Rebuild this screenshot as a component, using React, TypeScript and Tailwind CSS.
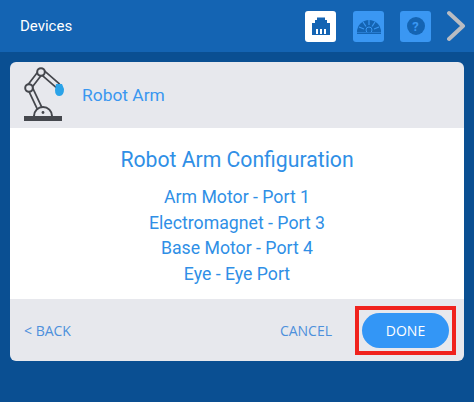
import React from "react";

const roboto = { fontFamily: "Roboto, sans-serif" };

function Tile({ active, children, className }: { active?: boolean; children: React.ReactNode; className?: string }) {
  return (
    <div className={`w-[31px] h-[31px] rounded-[3px] flex items-center justify-center ${active ? "bg-white" : "bg-[#3a97f3]"} ${className ?? ""}`}>
      {children}
    </div>
  );
}

function Link({ d }: { d: string }) {
  return (
    <>
      <path d={d} stroke="#45474d" strokeWidth="6.500" strokeLinecap="round" />
      <path d={d} stroke="#e7e8ed" strokeWidth="3" strokeLinecap="round" />
    </>
  );
}

function RobotArm() {
  return (
    <svg width="44" height="56" viewBox="0 0 44 56" fill="none">
      <rect x="1" y="49" width="38" height="5" fill="#45474d" />
      <Link d="M7 21 L16 40" />
      <path d="M11 49 a9 9 0 0 1 18 0" stroke="#45474d" strokeWidth="2" fill="#e7e8ed" />
      <circle cx="20" cy="45.500" r="1.400" fill="#45474d" />
      <Link d="M7 19 L17 6" />
      <Link d="M19 5 L34 18" />
      <circle cx="18" cy="5" r="3.800" stroke="#45474d" strokeWidth="2" fill="#e7e8ed" />
      <circle cx="6" cy="21" r="3.800" stroke="#45474d" strokeWidth="2" fill="#e7e8ed" />
      <path d="M33 17 L39 17 L41 22 Q41 29 36.500 29 Q32 29 32 23 Z" fill="#2ba3e8" />
    </svg>
  );
}

export default function App() {
  return (
    <div className="w-[474px] h-[402px] bg-[#0a4f92] flex flex-col overflow-hidden" style={roboto}>
      <div className="h-[52px] bg-[#1464b3] flex items-center pl-[20px] shrink-0">
        <span className="text-white text-[15px] flex-1">Devices</span>
        <div className="flex items-center gap-[16px]">
          <Tile active className="mr-[1px]">
            <svg width="20" height="20" viewBox="0 0 20 20">
              <path d="M1 19 V7 H4 V4 H6 V1.500 H14 V4 H16 V7 H19 V19 Z" fill="#1464b3" />
              <rect x="5" y="13" width="2" height="5" fill="#fff" />
              <rect x="9" y="13" width="2" height="5" fill="#fff" />
              <rect x="13" y="13" width="2" height="5" fill="#fff" />
            </svg>
          </Tile>
          <Tile>
            <svg width="26" height="18" viewBox="0 0 26 18" fill="none">
              <path d="M1 15 A12 12 0 0 1 25 15 Z" fill="#1464b3" />
              <g stroke="#3a97f3" strokeWidth="1.200">
                <path d="M13 3 V8" />
                <path d="M7 5 L10 9.500" />
                <path d="M19 5 L16 9.500" />
                <path d="M3 10 L8 12" />
                <path d="M23 10 L18 12" />
              </g>
              <circle cx="13" cy="13" r="3" fill="#1464b3" stroke="#3a97f3" strokeWidth="1" />
              <rect x="1" y="15.500" width="24" height="1.500" fill="#1464b3" />
            </svg>
          </Tile>
          <Tile>
            <div className="w-[18px] h-[18px] rounded-full bg-[#1464b3] flex items-center justify-center text-[#3a97f3] text-[13px] font-bold leading-none">?</div>
          </Tile>
        </div>
        <svg width="20" height="32" viewBox="0 0 20 32" fill="none" className="ml-[16px] mr-[7px]">
          <path d="M2 3 L16 16 L2 29" stroke="#b9bcc2" strokeWidth="4" strokeLinecap="round" strokeLinejoin="round" />
        </svg>
      </div>

      <div className="mx-[10px] mt-[10px] h-[299px] rounded-[6px] overflow-hidden bg-[#e7e8ed] flex flex-col">
        <div className="h-[66px] flex items-center pl-[13px] shrink-0">
          <RobotArm />
          <span className="ml-[15px] text-[#3a97f0] text-[17.400px]">Robot Arm</span>
        </div>
        <div className="h-[171px] bg-white flex flex-col items-center text-[#2f8fe6] shrink-0">
          <div className="text-[21.200px] leading-[26px] mt-[19px] mb-[12px]">Robot Arm Configuration</div>
          <div className="text-[17.700px] leading-[25.700px] text-center">
            <div>Arm Motor - Port 1</div>
            <div>Electromagnet - Port 3</div>
            <div>Base Motor - Port 4</div>
            <div>Eye - Eye Port</div>
          </div>
        </div>
        <div className="flex-1 flex items-center pl-[14px] text-[#4d90dc] text-[14px]" style={{ fontFamily: '"Open Sans", sans-serif' }}>
          <span className="flex-1">&lt; BACK</span>
          <span className="mr-[23px]">CANCEL</span>
          <div className="mr-[8px] border-[4px] border-[#f0221d] w-[101px] h-[49px] flex items-center justify-center">
            <div className="w-[87px] h-[35px] rounded-full bg-[#3396f6] text-white flex items-center justify-center">DONE</div>
          </div>
        </div>
      </div>
    </div>
  );
}
